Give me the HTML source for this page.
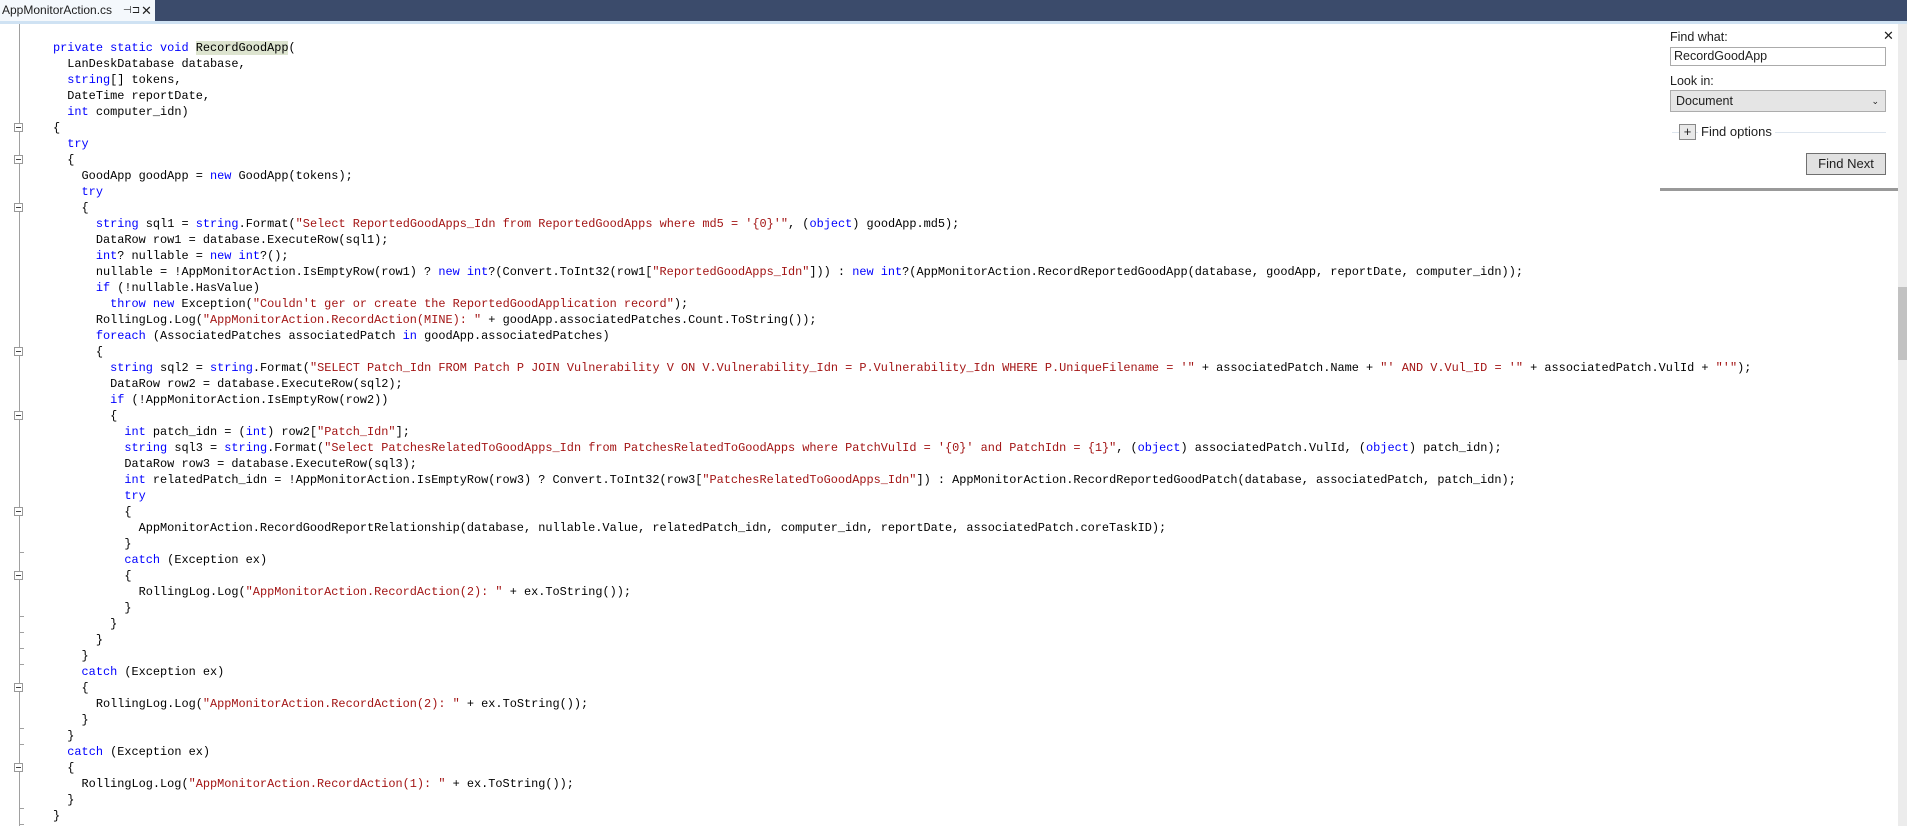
<!DOCTYPE html>
<html><head><meta charset="utf-8"><style>
body{margin:0;width:1907px;height:826px;overflow:hidden;background:#fff;position:relative;font-family:"Liberation Sans",sans-serif}
.top{position:absolute;left:0;top:0;width:1907px;height:21px;background:#3b4b6b}
.tab{position:absolute;left:0;top:0;width:155px;height:21px;background:#f4f8fc;font-size:12px;line-height:21px;padding-left:2px;box-sizing:border-box;color:#1e1e1e}
.tab .ic{position:absolute;left:123px;top:0;font-size:10px}
.tab .x{position:absolute;left:141px;top:0;font-size:13px}
.strip{position:absolute;left:0;top:21px;width:1907px;height:3px;background:#cfe2f3}
.gl{position:absolute;left:19px;top:24px;width:1px;height:802px;background:#a0a0a0}
.fb{position:absolute;left:14px;width:9px;height:9px;border:1px solid #999;background:#fff;box-sizing:border-box}
.fb:after{content:"";position:absolute;left:1px;top:3px;width:5px;height:1px;background:#444}
.tk{position:absolute;left:19px;width:5px;height:1px;background:#a0a0a0}
pre{position:absolute;left:53px;top:40px;margin:0;font-family:"Liberation Mono",monospace;font-size:11.9px;line-height:16px;color:#000}
.k{color:#0000ff}.s{color:#a31515}.h{background:#dde4cf}
.find{position:absolute;left:1660px;top:24px;width:238px;height:164px;background:#fff;border-bottom:3px solid #999;font-size:12.5px;color:#1e1e1e}
.sb{position:absolute;left:1898px;top:24px;width:9px;height:802px;background:#ececec}
.th{position:absolute;left:1898px;top:287px;width:9px;height:73px;background:#c2c2c2}
</style></head><body>
<div class="top"></div>
<div class="tab">AppMonitorAction.cs<span class="ic">⊣⊐</span><span class="x">✕</span></div>
<div class="strip"></div>
<div class="gl"></div>
<div class="fb" style="top:123px"></div><div class="fb" style="top:155px"></div><div class="fb" style="top:203px"></div><div class="fb" style="top:347px"></div><div class="fb" style="top:411px"></div><div class="fb" style="top:507px"></div><div class="fb" style="top:571px"></div><div class="fb" style="top:683px"></div><div class="fb" style="top:763px"></div>
<div class="tk" style="top:552px"></div><div class="tk" style="top:616px"></div><div class="tk" style="top:632px"></div><div class="tk" style="top:648px"></div><div class="tk" style="top:664px"></div><div class="tk" style="top:728px"></div><div class="tk" style="top:744px"></div><div class="tk" style="top:808px"></div><div class="tk" style="top:824px"></div>
<pre><span class="k">private static void</span> <span class="h">RecordGoodApp</span>(
  LanDeskDatabase database,
  <span class="k">string</span>[] tokens,
  DateTime reportDate,
  <span class="k">int</span> computer_idn)
{
  <span class="k">try</span>
  {
    GoodApp goodApp = <span class="k">new</span> GoodApp(tokens);
    <span class="k">try</span>
    {
      <span class="k">string</span> sql1 = <span class="k">string</span>.Format(<span class="s">"Select ReportedGoodApps_Idn from ReportedGoodApps where md5 = '{0}'"</span>, (<span class="k">object</span>) goodApp.md5);
      DataRow row1 = database.ExecuteRow(sql1);
      <span class="k">int</span>? nullable = <span class="k">new int</span>?();
      nullable = !AppMonitorAction.IsEmptyRow(row1) ? <span class="k">new int</span>?(Convert.ToInt32(row1[<span class="s">"ReportedGoodApps_Idn"</span>])) : <span class="k">new int</span>?(AppMonitorAction.RecordReportedGoodApp(database, goodApp, reportDate, computer_idn));
      <span class="k">if</span> (!nullable.HasValue)
        <span class="k">throw new</span> Exception(<span class="s">"Couldn't ger or create the ReportedGoodApplication record"</span>);
      RollingLog.Log(<span class="s">"AppMonitorAction.RecordAction(MINE): "</span> + goodApp.associatedPatches.Count.ToString());
      <span class="k">foreach</span> (AssociatedPatches associatedPatch <span class="k">in</span> goodApp.associatedPatches)
      {
        <span class="k">string</span> sql2 = <span class="k">string</span>.Format(<span class="s">"SELECT Patch_Idn FROM Patch P JOIN Vulnerability V ON V.Vulnerability_Idn = P.Vulnerability_Idn WHERE P.UniqueFilename = '"</span> + associatedPatch.Name + <span class="s">"' AND V.Vul_ID = '"</span> + associatedPatch.VulId + <span class="s">"'"</span>);
        DataRow row2 = database.ExecuteRow(sql2);
        <span class="k">if</span> (!AppMonitorAction.IsEmptyRow(row2))
        {
          <span class="k">int</span> patch_idn = (<span class="k">int</span>) row2[<span class="s">"Patch_Idn"</span>];
          <span class="k">string</span> sql3 = <span class="k">string</span>.Format(<span class="s">"Select PatchesRelatedToGoodApps_Idn from PatchesRelatedToGoodApps where PatchVulId = '{0}' and PatchIdn = {1}"</span>, (<span class="k">object</span>) associatedPatch.VulId, (<span class="k">object</span>) patch_idn);
          DataRow row3 = database.ExecuteRow(sql3);
          <span class="k">int</span> relatedPatch_idn = !AppMonitorAction.IsEmptyRow(row3) ? Convert.ToInt32(row3[<span class="s">"PatchesRelatedToGoodApps_Idn"</span>]) : AppMonitorAction.RecordReportedGoodPatch(database, associatedPatch, patch_idn);
          <span class="k">try</span>
          {
            AppMonitorAction.RecordGoodReportRelationship(database, nullable.Value, relatedPatch_idn, computer_idn, reportDate, associatedPatch.coreTaskID);
          }
          <span class="k">catch</span> (Exception ex)
          {
            RollingLog.Log(<span class="s">"AppMonitorAction.RecordAction(2): "</span> + ex.ToString());
          }
        }
      }
    }
    <span class="k">catch</span> (Exception ex)
    {
      RollingLog.Log(<span class="s">"AppMonitorAction.RecordAction(2): "</span> + ex.ToString());
    }
  }
  <span class="k">catch</span> (Exception ex)
  {
    RollingLog.Log(<span class="s">"AppMonitorAction.RecordAction(1): "</span> + ex.ToString());
  }
}</pre>
<div class="find">
  <div style="position:absolute;left:10px;top:6px">Find what:</div>
  <div style="position:absolute;left:223px;top:4px;font-size:13px">✕</div>
  <div style="position:absolute;left:10px;top:23px;width:216px;height:19px;border:1px solid #ababab;box-sizing:border-box;padding-left:3px;line-height:17px">RecordGoodApp</div>
  <div style="position:absolute;left:10px;top:50px">Look in:</div>
  <div style="position:absolute;left:10px;top:66px;width:216px;height:22px;border:1px solid #acacac;background:#e5e5e5;box-sizing:border-box;padding-left:5px;line-height:20px">Document<span style="position:absolute;right:6px;top:0;font-size:9px">⌄</span></div>
  <div style="position:absolute;left:12px;top:108px;width:214px;height:1px;background:#dde5ee"></div>
  <div style="position:absolute;left:19px;top:100px;width:17px;height:16px;border:1px solid #888;background:#e8e8e8;box-sizing:border-box;text-align:center;line-height:14px;font-size:13px">+</div>
  <div style="position:absolute;left:38px;top:99px;background:#fff;padding:0 3px;font-size:13px;line-height:18px">Find options</div>
  <div style="position:absolute;left:146px;top:129px;width:80px;height:22px;border:1px solid #707070;background:#e1e1e1;box-sizing:border-box;text-align:center;line-height:20px;font-size:13px">Find Next</div>
</div>
<div class="sb"></div><div class="th"></div>
</body></html>
